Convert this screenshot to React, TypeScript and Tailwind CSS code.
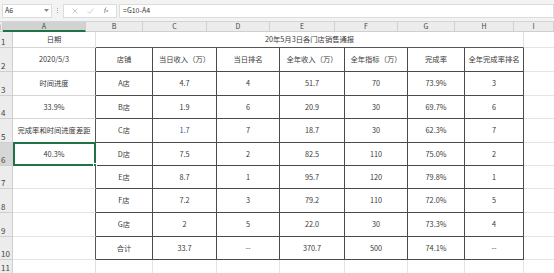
import React from "react";

const cols = ["A", "B", "C", "D", "E", "F", "G", "H", "I"];
const colW = [83, 57, 64, 63, 65, 63, 57, 59, 40];
const rowH = [16, 24, 24, 23, 24, 23, 23, 24, 24, 23, 14];

const aCol = ["日期", "2020/5/3", "时间进度", "33.9%", "完成率和时间进度差距", "40.3%"];
const header = ["店铺", "当日收入（万）", "当日排名", "全年收入（万）", "全年指标（万）", "完成率", "全年完成率排名"];
const data = [
  ["A店", "4.7", "4", "51.7", "70", "73.9%", "3"],
  ["B店", "1.9", "6", "20.9", "30", "69.7%", "6"],
  ["C店", "1.7", "7", "18.7", "30", "62.3%", "7"],
  ["D店", "7.5", "2", "82.5", "110", "75.0%", "2"],
  ["E店", "8.7", "1", "95.7", "120", "79.8%", "1"],
  ["F店", "7.2", "3", "79.2", "110", "72.0%", "5"],
  ["G店", "2", "5", "22.0", "30", "73.3%", "4"],
  ["合计", "33.7", "--", "370.7", "500", "74.1%", "--"],
];

const font = { fontFamily: '"Noto Sans CJK SC", "Liberation Sans", sans-serif' };

export default function App() {
  const cells: React.ReactNode[] = [];
  rowH.forEach((_, r) => {
    const rowNum = r + 1;
    cells.push(
      <div
        key={`rh${r}`}
        className={`flex items-end pl-[1px] border-r border-b border-[#cfcfcf] text-[8px] leading-[10px] text-[#444] ${
          rowNum === 6 ? "bg-[#d6d6d6]" : "bg-[#ececec]"
        }`}
      >
        {rowNum}
      </div>
    );
    const aDark = rowNum >= 2 && rowNum <= 10;
    cells.push(
      <div
        key={`a${r}`}
        className={`relative flex items-center justify-center bg-white border-b text-[7.3px] text-[#3a3a3a] whitespace-nowrap ${
          aDark ? "border-r border-r-[#555]" : "border-r border-r-[#e0e0e0]"
        } ${rowNum <= 6 ? "border-b-[#d4d4d4]" : "border-b-[#e4e4e4]"}`}
      >
        {rowNum <= 6 ? aCol[r] : ""}
        {rowNum === 6 && (
          <div className="absolute left-0 top-[-1px] right-[-1px] bottom-[-1px] border-2 border-[#217346]">
            <div className="absolute right-[-3px] bottom-[-3px] w-[4px] h-[4px] bg-[#217346] border border-white" />
          </div>
        )}
      </div>
    );
    if (rowNum === 1) {
      cells.push(
        <div
          key="title"
          className="col-span-7 flex items-center justify-center bg-white border-b border-b-[#555] border-r border-r-[#e0e0e0] text-[7.3px] text-[#3a3a3a]"
        >
          20年5月3日各门店销售通报
        </div>
      );
    } else if (rowNum >= 2 && rowNum <= 10) {
      const row = rowNum === 2 ? header : data[rowNum - 3];
      row.forEach((v, c) => {
        cells.push(
          <div
            key={`t${r}-${c}`}
            className={`flex items-center justify-center bg-white border-r border-b border-[#4a4a4a] text-[7.3px] whitespace-nowrap ${
              rowNum === 5 && c === 1 ? "text-[#2f5597]" : "text-[#3a3a3a]"
            }`}
          >
            {v}
          </div>
        );
      });
    } else {
      for (let c = 0; c < 7; c++) {
        cells.push(
          <div key={`e${r}-${c}`} className="bg-white border-r border-b border-[#e4e4e4]" />
        );
      }
    }
    cells.push(
      <div key={`i${r}`} className="bg-white border-r border-b border-[#e4e4e4]" />
    );
  });

  return (
    <div className="w-[554px] h-[273px] overflow-hidden bg-white" style={font}>
      <div className="h-[22px] bg-[#f3f3f3] flex items-center border-b border-[#d4d4d4]">
        <div className="ml-[2px] w-[50px] h-[14px] bg-white border border-[#dcdcdc] flex items-center justify-between px-[2px]">
          <span className="text-[7px] text-[#333]">A6</span>
          <svg width="5" height="3" viewBox="0 0 5 3">
            <path d="M0 0 L5 0 L2.5 3 Z" fill="#888" />
          </svg>
        </div>
        <div className="mx-[5px] flex flex-col gap-[1px]">
          <div className="w-[1px] h-[1px] bg-[#aaa]" />
          <div className="w-[1px] h-[1px] bg-[#aaa]" />
          <div className="w-[1px] h-[1px] bg-[#aaa]" />
        </div>
        <div className="w-[54px] h-[14px] bg-white border border-[#dcdcdc] flex items-center justify-around px-[3px]">
          <svg width="6" height="6" viewBox="0 0 6 6">
            <path d="M0.5 0.5 L5.5 5.5 M5.5 0.5 L0.5 5.5" stroke="#c8c8c8" strokeWidth="0.9" />
          </svg>
          <svg width="7" height="6" viewBox="0 0 7 6">
            <path d="M0.5 3.2 L2.6 5.3 L6.5 0.6" stroke="#c8c8c8" strokeWidth="0.9" fill="none" />
          </svg>
          <span className="text-[7px] italic text-[#555]" style={{ fontFamily: '"Liberation Serif", serif' }}>
            f<span className="text-[5px]">x</span>
          </span>
        </div>
        <div className="ml-[2px] flex-1 h-[14px] bg-white border border-[#dcdcdc] flex items-center px-[3px]">
          <span className="text-[7px] text-[#333]">=G10-A4</span>
        </div>
      </div>
      <div className="flex h-[10px]">
        <div className="w-[13px] bg-[#ececec] border-r border-b border-[#cfcfcf] relative">
          <svg className="absolute right-[1px] bottom-[1px]" width="6" height="6" viewBox="0 0 6 6">
            <path d="M6 0 L6 6 L0 6 Z" fill="#c4c4c4" />
          </svg>
        </div>
        {cols.map((c, i) => (
          <div
            key={c}
            style={{ width: colW[i] }}
            className={`shrink-0 flex items-center justify-center text-[7px] leading-none border-r border-[#cfcfcf] ${
              c === "A"
                ? "bg-[#d2d2d2] border-b-2 border-b-[#217346] text-[#1d5c38]"
                : "bg-[#ececec] border-b border-b-[#cfcfcf] text-[#444]"
            }`}
          >
            {c}
          </div>
        ))}
      </div>
      <div className="grid grid-cols-[13px_83px_57px_64px_63px_65px_63px_57px_59px_40px] grid-rows-[16px_24px_24px_23px_24px_23px_23px_24px_24px_23px_14px]">
        {cells}
      </div>
    </div>
  );
}
